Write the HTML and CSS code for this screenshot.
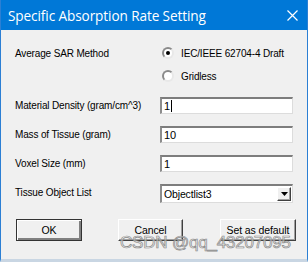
FILE: index.html
```html
<!DOCTYPE html>
<html lang="en">
<head>
    <meta charset="UTF-8">
    <title>Specific Absorption Rate Setting</title>
    <link rel="stylesheet" href="styles.css">
</head>
<body>
    <div class="window">
        <div class="titlebar">
            <span class="title">Specific Absorption Rate Setting</span>
            <svg class="close" width="11" height="11" viewBox="0 0 11 11">
                <path d="M0.5 0.5 L10.5 10.5 M10.5 0.5 L0.5 10.5" stroke="#fff" stroke-width="1.2"/>
            </svg>
        </div>

        <div class="content">
            <div class="row sar">
                <div class="label">Average SAR Method</div>
                <div class="radios">
                    <div class="radio checked"><span class="dot"></span>IEC/IEEE 62704-4 Draft</div>
                    <div class="radio"><span class="dot"></span>Gridless</div>
                </div>
            </div>

            <div class="row">
                <div class="label">Material Density (gram/cm^3)</div>
                <div class="input">1<span class="caret"></span></div>
            </div>
            <div class="row">
                <div class="label">Mass of Tissue (gram)</div>
                <div class="input">10</div>
            </div>
            <div class="row">
                <div class="label">Voxel Size (mm)</div>
                <div class="input">1</div>
            </div>
            <div class="row">
                <div class="label">Tissue Object List</div>
                <div class="select">
                    <span class="value">Objectlist3</span>
                    <span class="arrow">
                        <svg width="7" height="4" viewBox="0 0 7 4"><path d="M0 0 H7 L3.5 4 Z" fill="#000"/></svg>
                    </span>
                </div>
            </div>

            <div class="buttons">
                <button class="btn default">OK</button>
                <button class="btn cancel">Cancel</button>
                <button class="btn setdef">Set as default</button>
            </div>
        </div>

        <div class="watermark">CSDN @qq_43207095</div>
    </div>
</body>
</html>
```

FILE: styles.css
```css
html, body {
    margin: 0;
    padding: 0;
    background: #f0f0f0;
}
.window {
    position: relative;
    width: 308px;
    height: 262px;
    box-sizing: border-box;
    background: #f0f0f0;
    border-left: 1px solid #2b7fd4;
    border-right: 1px solid #2b7fd4;
    border-bottom: 3px solid #c9d6e3;
    font-family: "Liberation Sans", Arial, sans-serif;
    font-size: 10px;
    letter-spacing: -0.15px;
    color: #000;
    overflow: hidden;
}
.titlebar {
    height: 30px;
    margin: 0 -1px;
    background: #0078d7;
    display: flex;
    align-items: center;
    justify-content: space-between;
    padding: 0 10px 0 8px;
}
.title {
    font-family: "Open Sans", "Noto Sans", sans-serif;
    font-size: 13.6px;
    color: #fff;
    letter-spacing: -0.1px;
}
.close {
    margin-top: 1px;
}
.content {
    padding: 15px 0 0 14px;
}
.row {
    display: flex;
    align-items: center;
    height: 17px;
    margin-bottom: 12px;
}
.row .label {
    width: 145px;
}
.row.sar {
    height: auto;
    align-items: flex-start;
    margin-bottom: 13px;
}
.row.sar .label {
    padding-top: 3px;
}
.radios {
    display: flex;
    flex-direction: column;
    gap: 7px;
}
.radio {
    display: flex;
    align-items: center;
    height: 16px;
    padding-left: 2px;
}
.radio .dot {
    position: relative;
    width: 8px;
    height: 8px;
    margin-right: 7px;
    border-radius: 50%;
    background: #fff;
    border: 2px solid;
    border-color: #8a8a8a #e8e8e8 #e8e8e8 #8a8a8a;
}
.radio.checked .dot::after {
    content: "";
    position: absolute;
    left: 2px;
    top: 2px;
    width: 4px;
    height: 4px;
    border-radius: 50%;
    background: #000;
}
.input, .select {
    width: 133px;
    height: 17px;
    box-sizing: border-box;
    background: #fff;
    border-top: 2px solid #7d7d7d;
    border-left: 2px solid #8d8d8d;
    border-right: 1px solid #dcdcdc;
    border-bottom: 1px solid #dcdcdc;
    padding-left: 2px;
    line-height: 14px;
    font-size: 11px;
    display: flex;
    align-items: center;
}
.caret {
    display: inline-block;
    width: 1px;
    height: 12px;
    margin-left: 1px;
    background: #000;
}
.select {
    height: 19px;
    margin-top: 2px;
    justify-content: space-between;
    padding-right: 1px;
    font-size: 10.5px;
}
.select .arrow {
    width: 14px;
    height: 14px;
    box-sizing: border-box;
    background: #f0f0f0;
    border: 1px solid;
    border-color: #fff #404040 #404040 #fff;
    box-shadow: inset -1px -1px 0 #a0a0a0;
    display: flex;
    align-items: center;
    justify-content: center;
}
.buttons {
    display: flex;
    margin-top: 18px;
    padding-left: 1px;
}
.btn {
    height: 22px;
    box-sizing: border-box;
    background: #f0f0f0;
    font-family: "Liberation Sans", Arial, sans-serif;
    font-size: 10.5px;
    letter-spacing: -0.1px;
    color: #000;
    border: 1px solid;
    border-color: #fff #404040 #404040 #fff;
    box-shadow: inset -1px -1px 0 #a0a0a0;
    padding: 0;
}
.btn.default {
    width: 66px;
    border-color: #333;
    box-shadow: inset 1px 1px 0 #fff, inset -2px -2px 0 #808080;
}
.btn.cancel {
    width: 65px;
    margin-left: 36px;
}
.btn.setdef {
    width: 76px;
    margin-left: 37px;
}
.watermark {
    position: absolute;
    left: 119px;
    top: 233px;
    font-family: "Liberation Sans", Arial, sans-serif;
    font-size: 17px;
    color: rgba(235, 235, 235, 0.6);
    -webkit-text-stroke: 0.7px #8a8a8a;
    letter-spacing: -0.2px;
    white-space: nowrap;
}
```
